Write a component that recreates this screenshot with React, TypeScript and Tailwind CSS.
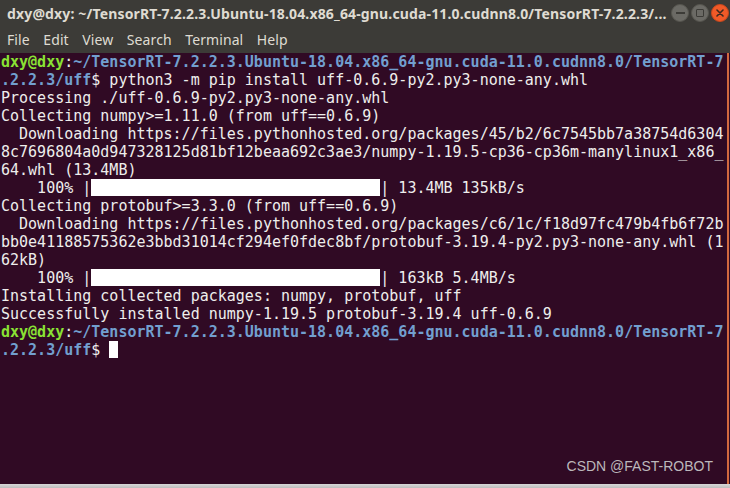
import React from "react";

const G = "text-[#8ae234] font-bold";
const B = "text-[#729fcf] font-bold";

type Seg = { t?: string; c?: string; bar?: boolean; cursor?: boolean };

const lines: Seg[][] = [
  [{ t: "dxy@dxy", c: G }, { t: ":" }, { t: "~/TensorRT-7.2.2.3.Ubuntu-18.04.x86_64-gnu.cuda-11.0.cudnn8.0/TensorRT-7", c: B }],
  [{ t: ".2.2.3/uff", c: B }, { t: "$ python3 -m pip install uff-0.6.9-py2.py3-none-any.whl" }],
  [{ t: "Processing ./uff-0.6.9-py2.py3-none-any.whl" }],
  [{ t: "Collecting numpy>=1.11.0 (from uff==0.6.9)" }],
  [{ t: "  Downloading https://files.pythonhosted.org/packages/45/b2/6c7545bb7a38754d6304" }],
  [{ t: "8c7696804a0d947328125d81bf12beaa692c3ae3/numpy-1.19.5-cp36-cp36m-manylinux1_x86_" }],
  [{ t: "64.whl (13.4MB)" }],
  [{ t: "    100% |" }, { bar: true }, { t: "| 13.4MB 135kB/s" }],
  [{ t: "Collecting protobuf>=3.3.0 (from uff==0.6.9)" }],
  [{ t: "  Downloading https://files.pythonhosted.org/packages/c6/1c/f18d97fc479b4fb6f72b" }],
  [{ t: "bb0e41188575362e3bbd31014cf294ef0fdec8bf/protobuf-3.19.4-py2.py3-none-any.whl (1" }],
  [{ t: "62kB)" }],
  [{ t: "    100% |" }, { bar: true }, { t: "| 163kB 5.4MB/s" }],
  [{ t: "Installing collected packages: numpy, protobuf, uff" }],
  [{ t: "Successfully installed numpy-1.19.5 protobuf-3.19.4 uff-0.6.9" }],
  [{ t: "dxy@dxy", c: G }, { t: ":" }, { t: "~/TensorRT-7.2.2.3.Ubuntu-18.04.x86_64-gnu.cuda-11.0.cudnn8.0/TensorRT-7", c: B }],
  [{ t: ".2.2.3/uff", c: B }, { t: "$ " }, { cursor: true }],
];

const menu = ["File", "Edit", "View", "Search", "Terminal", "Help"];

export default function App() {
  return (
    <div className="w-[730px] h-[488px] flex flex-col bg-[#300a24] overflow-hidden">
      {/* title bar */}
      <div className="h-[26px] bg-[#3c3b37] flex items-center pl-[7px] pr-[1px] font-['Noto_Sans',sans-serif]">
        <div className="flex-1 text-[14px] font-bold text-[#dfdbd2] whitespace-nowrap overflow-hidden tracking-[0.15px]">
          dxy@dxy: ~/TensorRT-7.2.2.3.Ubuntu-18.04.x86_64-gnu.cuda-11.0.cudnn8.0/TensorRT-7.2.2.3/...
        </div>
        <div className="flex items-center gap-[2px]">
          <div className="w-[18px] h-[18px] rounded-full bg-[#6b6a65] border border-[#56554f] flex items-center justify-center">
            <div className="w-[9px] h-[2px] bg-[#3c3b37]" />
          </div>
          <div className="w-[18px] h-[18px] rounded-full bg-[#6b6a65] border border-[#56554f] flex items-center justify-center">
            <div className="w-[8px] h-[8px] border-[1.5px] border-[#3c3b37] rounded-[1px]" />
          </div>
          <div className="w-[18px] h-[18px] rounded-full bg-[#f05a28] border border-[#c9471c] flex items-center justify-center">
            <svg width="8" height="8" viewBox="0 0 8 8">
              <path d="M1 1 L7 7 M7 1 L1 7" stroke="#3c2a20" strokeWidth="1.6" strokeLinecap="round" />
            </svg>
          </div>
        </div>
      </div>
      {/* menu bar */}
      <div className="h-[27px] bg-[#3c3b37] flex items-center gap-[13.5px] pl-[7px] text-[14px] text-[#dfdbd2] font-['Noto_Sans',sans-serif] tracking-[0.1px]">
        {menu.map((m) => (
          <span key={m}>{m}</span>
        ))}
      </div>
      {/* terminal */}
      <div className="relative flex-1 flex">
        <div className="flex-1 pl-[1px] font-['DejaVu_Sans_Mono',monospace] text-[15px] leading-[18px] text-[#eeeeec]">
          {lines.map((ln, i) => (
            <div key={i} className="h-[18px] whitespace-pre">
              {ln.map((s, j) =>
                s.bar ? (
                  <span key={j} className="inline-block align-top w-[289px] h-[17px] bg-white" />
                ) : s.cursor ? (
                  <span key={j} className="inline-block align-top w-[9px] h-[17px] bg-white" />
                ) : (
                  <span key={j} className={s.c}>
                    {s.t}
                  </span>
                )
              )}
            </div>
          ))}
        </div>
        <div className="w-[2px] bg-[#d2693f] mr-[1px]" />
        <div className="absolute right-[17px] bottom-[7px] text-[14px] text-[#bcb8bb] font-['Liberation_Sans',sans-serif]">
          CSDN @FAST-ROBOT
        </div>
      </div>
      <div className="h-[4px] bg-gradient-to-b from-[#d8d8d8] to-[#bdbdbd]" />
    </div>
  );
}
